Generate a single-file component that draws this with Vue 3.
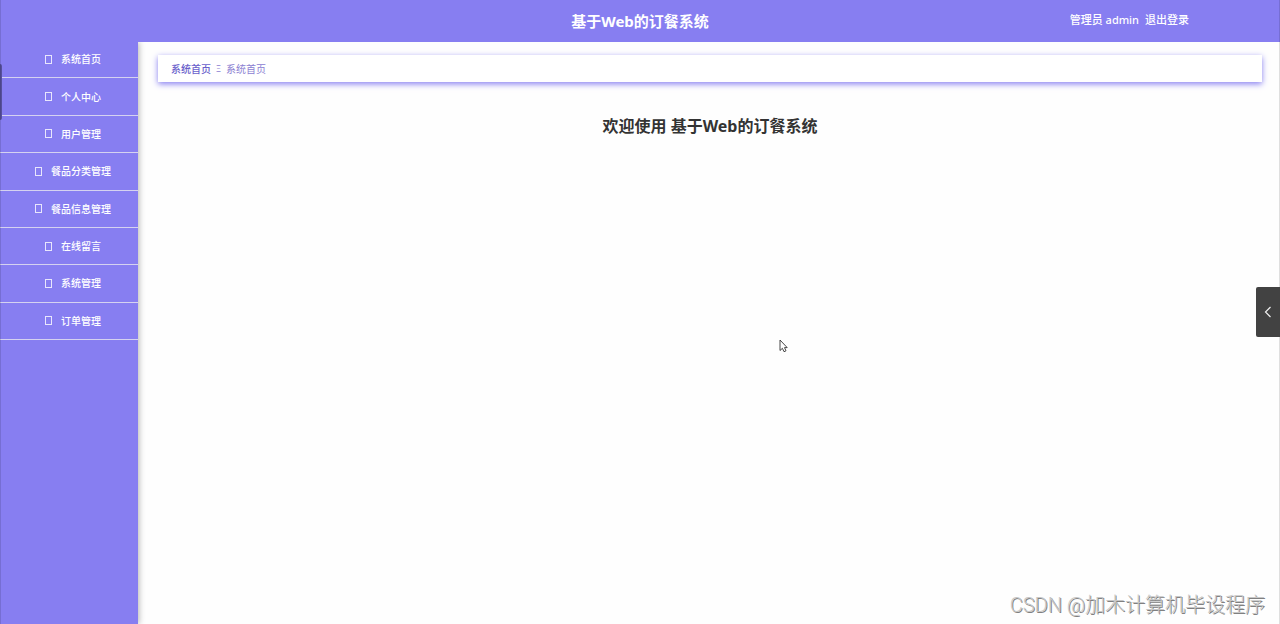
<template>
  <div class="layout">
    <header class="top-bar">
      <h1 class="title">基于Web的订餐系统</h1>
      <div class="user-box">
        <span>管理员 admin</span>
        <a href="#" class="logout" @click.prevent>退出登录</a>
      </div>
    </header>
    <div class="container">
      <aside class="sidebar">
        <nav>
          <ul class="menu">
            <li v-for="item in menuList" :key="item">
              <a href="#" class="menu-item" @click.prevent="current = item">
                <i class="menu-icon"></i>
                <span>{{ item }}</span>
              </a>
            </li>
          </ul>
        </nav>
      </aside>
      <main class="main">
        <nav class="breadcrumb">
          <a href="#" class="crumb-home" @click.prevent="current = menuList[0]">系统首页</a>
          <span class="separator">Ξ</span>
          <span class="crumb-current">{{ current }}</span>
        </nav>
        <h2 class="welcome">欢迎使用 基于Web的订餐系统</h2>
      </main>
    </div>

    <span class="edge-handle"></span>
    <button class="drawer-btn" type="button" aria-label="展开">
      <svg viewBox="0 0 8 12" width="8" height="12" fill="none" stroke="currentColor" stroke-width="1.2">
        <path d="M6.5 1L1.5 6L6.5 11"></path>
      </svg>
    </button>
    <svg class="cursor" viewBox="0 0 10 14" width="10" height="14">
      <path d="M1 1V11.5L3.4 9.3L5 12.7L7 11.8L5.5 8.6H8.2Z" fill="#fff" stroke="#333" stroke-width="0.9"></path>
    </svg>
    <div class="watermark">CSDN @加木计算机毕设程序</div>
  </div>
</template>

<script setup>
import { ref } from 'vue';

const menuList = [
  '系统首页',
  '个人中心',
  '用户管理',
  '餐品分类管理',
  '餐品信息管理',
  '在线留言',
  '系统管理',
  '订单管理'
];

const current = ref(menuList[0]);
</script>

<style>
body {
  margin: 0;
  background-color: #fefefe;
}
</style>

<style scoped>
.layout {
  position: relative;
  display: flex;
  flex-direction: column;
  min-height: 100vh;
  overflow: hidden;
  font-family: "Noto Sans", "Noto Sans CJK SC", sans-serif;
  color: #333;
}

/* 窗口左右边线 */
.layout::after {
  content: '';
  position: absolute;
  z-index: 3;
  inset: 0;
  border: solid rgba(0, 0, 0, 0.12);
  border-width: 0 1px;
  pointer-events: none;
}

a {
  color: inherit;
  text-decoration: none;
}

/* 顶部 */
.top-bar {
  position: relative;
  z-index: 2;
  display: grid;
  grid-template-columns: 1fr auto 1fr;
  align-items: center;
  height: 42px;
  background-color: #877ef1;
  color: #fff;
}

.title {
  grid-column: 2;
  margin: 0;
  padding-bottom: 1px;
  font-size: 15px;
  line-height: 20px;
  font-weight: bold;
}

.user-box {
  display: flex;
  justify-content: flex-end;
  gap: 6px;
  padding: 0 91px 2px 0;
  font-size: 11px;
  line-height: 16px;
  font-weight: 500;
}

.container {
  display: flex;
  flex: 1;
}

/* 侧边菜单 */
.sidebar {
  z-index: 1;
  flex: 0 0 138px;
  background-color: #877ef1;
  box-shadow: 1px 0 6px rgba(0, 0, 0, 0.3);
}

.menu {
  display: grid;
  grid-template-rows: repeat(8, 1fr);
  height: 299px;
  margin: -1px 0 0;
  padding: 0;
  list-style: none;
}

.menu-item {
  box-sizing: border-box;
  display: flex;
  justify-content: center;
  align-items: center;
  gap: 9px;
  height: 100%;
  padding-left: 8px;
  border-bottom: 1px solid #d5d2f0;
  color: #fff;
  font-size: 10px;
  line-height: 16px;
  font-weight: 500;
}

.menu-icon {
  box-sizing: border-box;
  width: 7px;
  height: 9px;
  border: 1px solid #e8e6fc;
}

/* 内容区 */
.main {
  flex: 1;
  padding: 13px 18px 0 20px;
}

.breadcrumb {
  display: flex;
  align-items: center;
  gap: 5px;
  height: 27px;
  padding: 0 13px;
  background-color: #fff;
  box-shadow: 0 2px 6px #877ef1;
  font-size: 10px;
  line-height: 16px;
  color: #8b80d2;
}

.crumb-home {
  color: #6a5fcb;
  font-weight: 500;
}

.separator {
  font-size: 8px;
}

.welcome {
  margin: 32px 0 0;
  font-size: 16px;
  line-height: 24px;
  text-align: center;
}

/* 悬浮元素 */
.edge-handle {
  position: absolute;
  z-index: 3;
  top: 64px;
  left: 0;
  width: 2px;
  height: 56px;
  border-radius: 0 2px 2px 0;
  background-color: #57509c;
}

.drawer-btn {
  position: absolute;
  z-index: 4;
  top: 287px;
  right: 0;
  display: flex;
  justify-content: center;
  align-items: center;
  width: 24px;
  height: 50px;
  padding: 0;
  border: none;
  border-radius: 2px 0 0 2px;
  background-color: #424242;
  color: #eee;
  cursor: pointer;
}

.cursor {
  position: absolute;
  top: 339px;
  left: 779px;
}

.watermark {
  position: absolute;
  right: 15px;
  bottom: 4px;
  font-family: Roboto, "Noto Sans CJK SC", sans-serif;
  font-size: 20px;
  line-height: 30px;
  font-weight: 300;
  color: #c8c8c8;
  text-shadow: 1px 1px 0 #808080;
}
</style>
